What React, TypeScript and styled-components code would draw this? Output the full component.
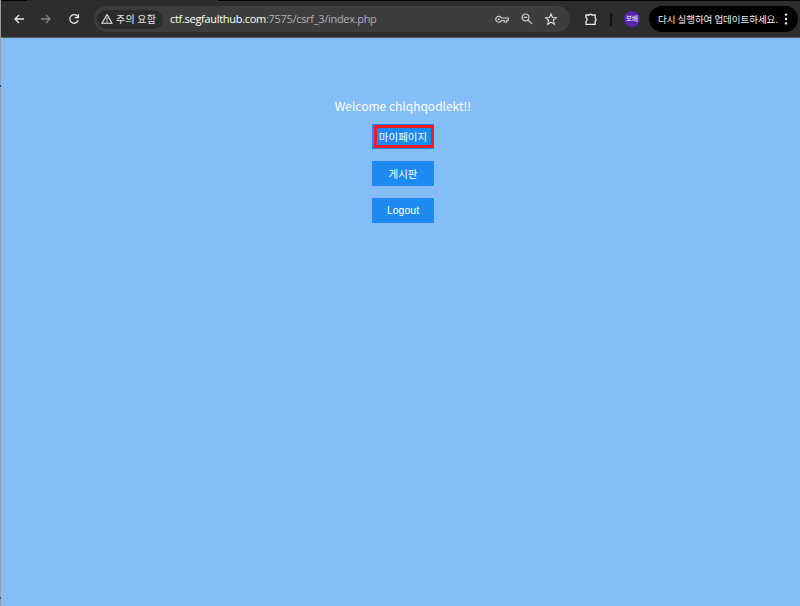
import React from "react";
import styled, { createGlobalStyle } from "styled-components";

const Global = createGlobalStyle`
  * { box-sizing: border-box; }
  body { margin: 0; background: #84bdf7; font-family: "Noto Sans CJK KR", sans-serif; }
`;

const Window = styled.div`
  width: 800px;
  height: 606px;
  display: flex;
  overflow: hidden;
`;

const DesktopEdge = styled.div`
  flex: 0 0 1px;
  display: flex;
  flex-direction: column;
  justify-content: space-between;
  padding: 85px 0 7px;
  background: #a09c9b;
`;

const EdgeMark = styled.div<{ $color: string }>`
  height: 2px;
  background: ${(p) => p.$color};
`;

const Browser = styled.div`
  flex: 1;
  display: flex;
  flex-direction: column;
`;

const TabStrip = styled.div`
  height: 1px;
  display: flex;
  background: #000;
`;

const ActiveTab = styled.div`
  width: 191px;
  margin-left: 26px;
  background: #2b2b2b;
`;

const Toolbar = styled.div`
  height: 36px;
  display: flex;
  align-items: center;
  background: #2d2d2d;
  color: #e4e4e4;
  padding-left: 10px;

  svg { display: block; flex: none; }
`;

const Divider = styled.div`
  height: 1px;
  background: #565b61;
`;

const NavGroup = styled.div`
  display: flex;
  gap: 14px;
  width: 83px;
`;

const Omnibox = styled.div`
  width: 476px;
  height: 26px;
  border-radius: 13px;
  background: #3d3d3d;
  display: flex;
  align-items: center;
  padding-left: 3px;
`;

const SecurityChip = styled.div`
  width: 66px;
  height: 19px;
  border-radius: 10px;
  background: #2b2b2b;
  display: flex;
  align-items: center;
  gap: 3px;
  padding-left: 4px;
  font-size: 10px;
  line-height: 18px;
  letter-spacing: 0.2px;
  white-space: nowrap;

  svg { margin-top: -1px; }
`;

const Url = styled.div`
  width: 331px;
  padding-left: 7px;
  font: 11px/20px "Open Sans", sans-serif;
  letter-spacing: -0.3px;
  color: #b0b0b0;
  white-space: nowrap;
`;

const Host = styled.span`
  color: #fff;
`;

const OmniActions = styled.div`
  display: flex;
  gap: 10px;
`;

const Extensions = styled.div`
  padding-left: 14px;
`;

const Separator = styled.div`
  width: 2px;
  height: 13px;
  margin: 0 12px 0 11px;
  background: #111;
`;

const Avatar = styled.div`
  width: 16px;
  height: 16px;
  border-radius: 50%;
  background: #5327ae;
  color: #fff;
  font-size: 6.5px;
  line-height: 15px;
  text-align: center;
  white-space: nowrap;
`;

const UpdateButton = styled.div`
  width: 149px;
  height: 26px;
  margin-left: 9px;
  border-radius: 13px;
  background: #000;
  color: #f1f1f1;
  display: flex;
  align-items: center;
  justify-content: space-between;
  padding: 0 10px 0 9px;
  font-size: 9.5px;
  line-height: 24px;
  letter-spacing: -0.04px;
  white-space: nowrap;
`;

const Page = styled.main`
  flex: 1;
  display: flex;
  flex-direction: column;
  align-items: center;
  gap: 12px;
  padding: 58px 0 0 5px;
  background: #84bdf7;
  color: #fff;
`;

const Welcome = styled.h1`
  margin: 0 0 -4px;
  height: 20px;
  font-size: 12px;
  line-height: 20px;
  font-weight: 400;
  white-space: nowrap;
`;

const MenuButton = styled.button<{ $latin?: boolean }>`
  position: relative;
  width: 62px;
  height: 25px;
  padding: 0;
  border: 0;
  background: #1e8af1;
  color: #fff;
  font-family: ${(p) => (p.$latin ? '"Liberation Sans"' : '"Noto Sans CJK KR"')}, sans-serif;
  font-size: 10.5px;
  line-height: 25px;
  white-space: nowrap;
`;

const Highlight = styled.span`
  position: absolute;
  inset: 1px 0 1px 2px;
  border: 3px solid #ed1c24;
`;

const Arrow = ({ back = false }: { back?: boolean }) => (
  <svg width="14" height="14" viewBox="0 0 14 14" fill="none" stroke={back ? "#e6e6e6" : "#858585"} strokeWidth="1.3">
    <path d={back ? "M13 7H4M8 3L4 7L8 11" : "M2 7H11M7 3L11 7L7 11"} />
  </svg>
);

const Reload = () => (
  <svg width="14" height="14" viewBox="0 0 14 14" fill="none" stroke="#e6e6e6" strokeWidth="1.3">
    <path d="M11.2 8.3A4.3 4.3 0 1 1 10.2 3.9L11.2 5" />
    <path d="M11.4 2V5.6H7.8" />
  </svg>
);

const Warning = () => (
  <svg width="12" height="12" viewBox="0 0 12 12" fill="none" stroke="#e6e6e6" strokeWidth="1.1">
    <path d="M6 1.5L11 10.3H1ZM6 4.5V7.2M6 8V9.2" />
  </svg>
);

const Key = () => (
  <svg width="16" height="14" viewBox="0 0 16 14" fill="none" stroke="#d2d2d2" strokeWidth="1.2">
    <path d="M7.5 6A3 3 0 1 0 7.5 8.5H10.2V10H12.8V8.5H14.2V6Z" />
    <circle cx="4.7" cy="7.2" r="1" fill="#d2d2d2" stroke="none" />
  </svg>
);

const ZoomOut = () => (
  <svg width="14" height="14" viewBox="0 0 14 14" fill="none" stroke="#d2d2d2" strokeWidth="1.2">
    <circle cx="5.5" cy="5.4" r="3.4" />
    <path d="M8 7.9L12 11.9M3.8 5.4H7.2" />
  </svg>
);

const Star = () => (
  <svg width="14" height="14" viewBox="0 0 14 14" fill="none" stroke="#e0e0e0" strokeWidth="1.1">
    <path d="M7 2L8.5 5.5L12.3 5.8L9.4 8.3L10.3 12.2L7 10.1L3.7 12.2L4.6 8.3L1.7 5.8L5.5 5.5Z" />
  </svg>
);

const Puzzle = () => (
  <svg width="15" height="14" viewBox="0 0 15 14" fill="none" stroke="#ededed" strokeWidth="1.3" strokeLinejoin="round">
    <path d="M2 3H5.2Q6.6 1.2 8 3H11.2V6.2Q13.2 7.6 11.2 9V12.4H2V9.6Q4.4 7.6 2 5.6Z" />
  </svg>
);

const Dots = () => (
  <svg width="4" height="14" viewBox="0 0 4 14" fill="#f1f1f1">
    <circle cx="2" cy="2.6" r="1.2" />
    <circle cx="2" cy="7" r="1.2" />
    <circle cx="2" cy="11.4" r="1.2" />
  </svg>
);

export default function App() {
  return (
    <>
      <Global />
      <Window>
        <DesktopEdge>
          <EdgeMark $color="#253b77" />
          <EdgeMark $color="#4b4644" />
        </DesktopEdge>
        <Browser>
          <TabStrip><ActiveTab /></TabStrip>
          <Toolbar>
            <NavGroup><Arrow back /><Arrow /><Reload /></NavGroup>
            <Omnibox>
              <SecurityChip><Warning />주의 요함</SecurityChip>
              <Url><Host>ctf.segfaulthub.com</Host>:7575/csrf_3/index.php</Url>
              <OmniActions><Key /><ZoomOut /><Star /></OmniActions>
            </Omnibox>
            <Extensions><Puzzle /></Extensions>
            <Separator />
            <Avatar>보배</Avatar>
            <UpdateButton>다시 실행하여 업데이트하세요.<Dots /></UpdateButton>
          </Toolbar>
          <Divider />
          <Page>
            <Welcome>Welcome chlqhqodlekt!!</Welcome>
            <MenuButton>마이페이지<Highlight /></MenuButton>
            <MenuButton>게시판</MenuButton>
            <MenuButton $latin>Logout</MenuButton>
          </Page>
        </Browser>
      </Window>
    </>
  );
}
